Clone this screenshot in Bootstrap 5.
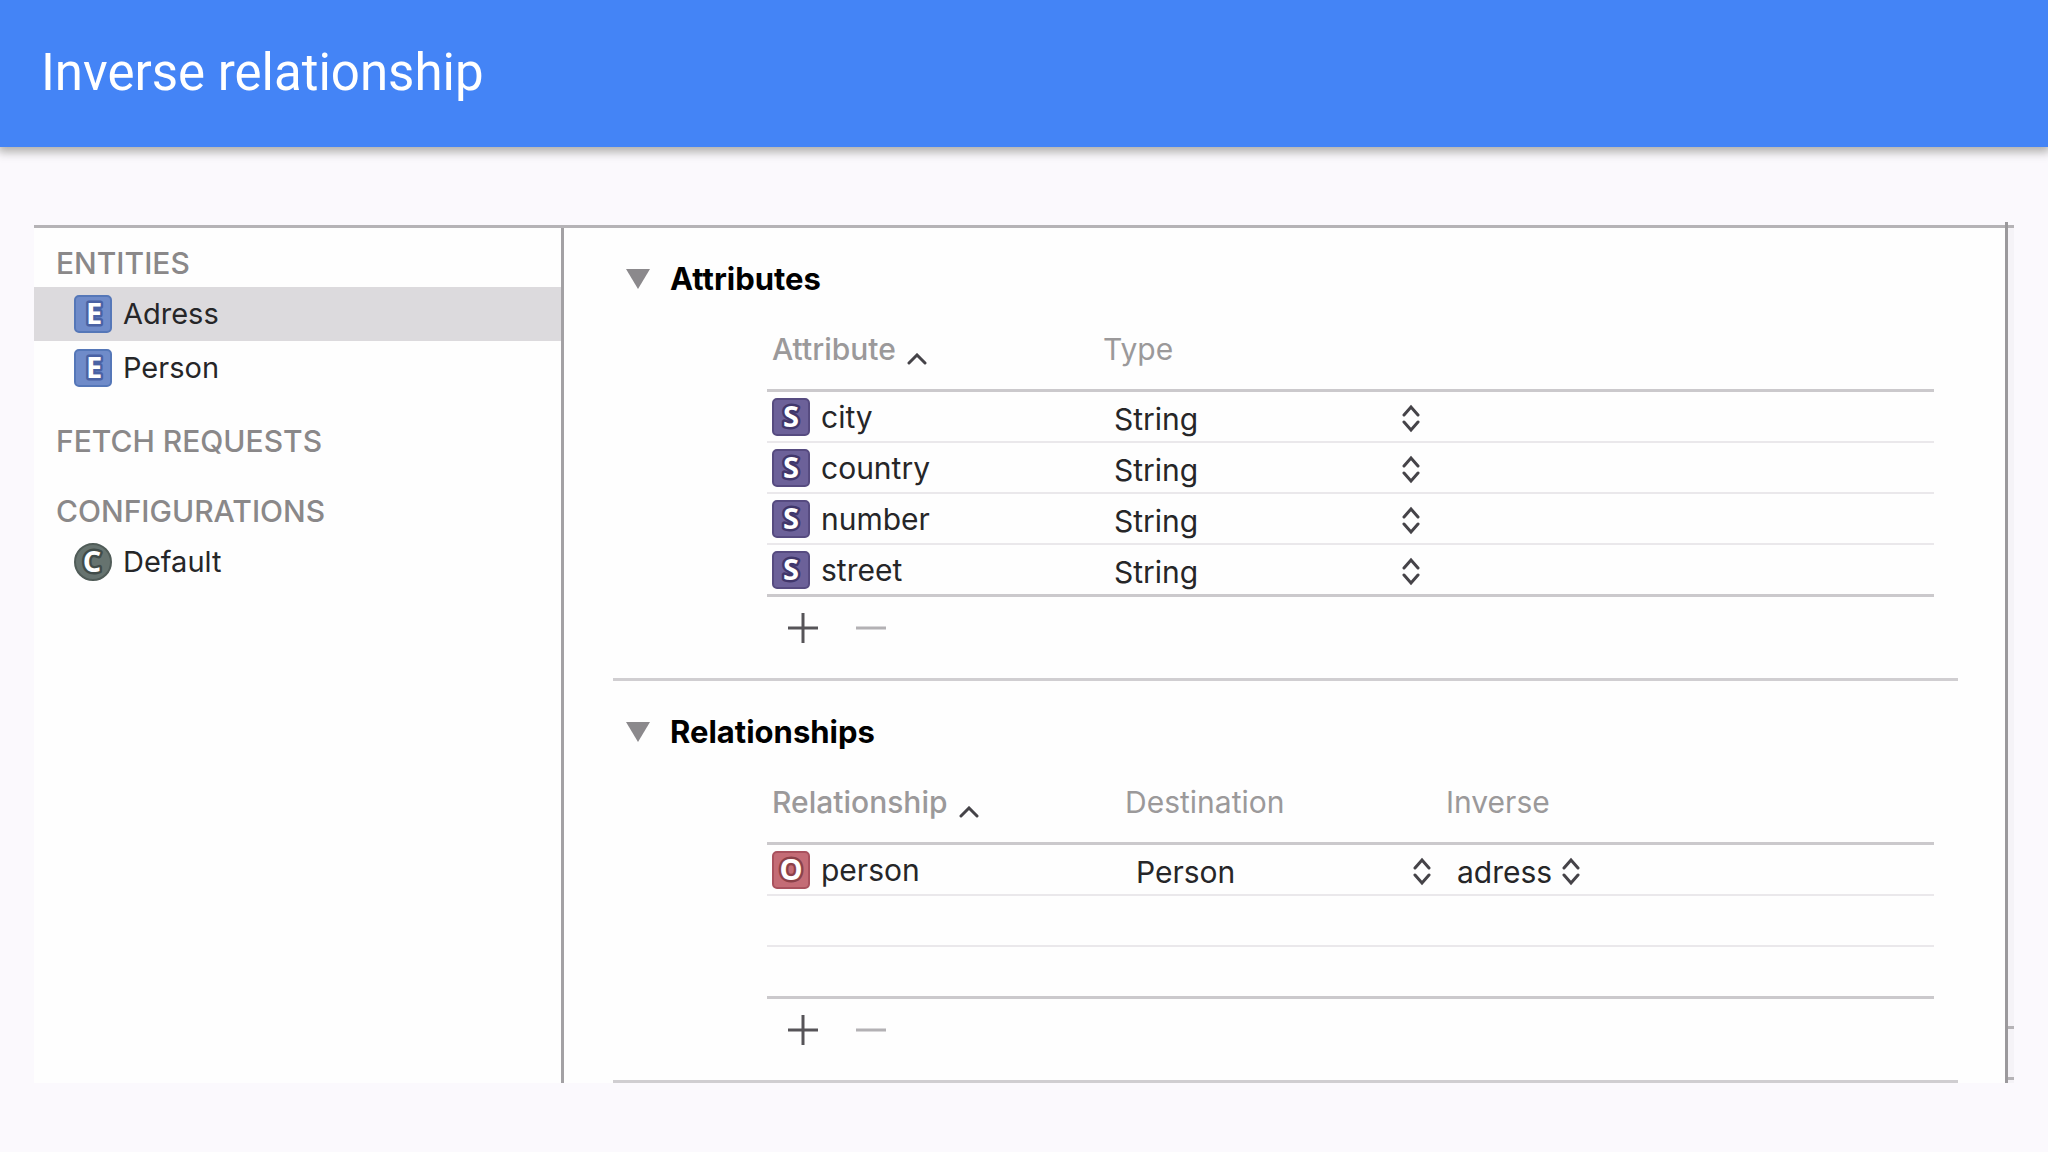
<!DOCTYPE html>
<html lang="en">
<head>
<meta charset="utf-8">
<meta name="viewport" content="width=device-width, initial-scale=1">
<title>Inverse relationship</title>
<link href="https://cdn.jsdelivr.net/npm/bootstrap@5.3.0/dist/css/bootstrap.min.css" rel="stylesheet">
<style>
  body { background: #fbf9fd; color: #262628; font-family: Inter, "Liberation Sans", sans-serif; font-size: 29px; line-height: 36px; }
  .slide-bar { background: #4484f6; height: 147px; padding: 0 41px 2px; box-shadow: 0 3px 9px 2px rgba(60, 60, 50, .4); }
  .slide-bar h1 { font-family: Roboto, sans-serif; font-size: 51px; font-weight: 400; line-height: 64px; color: #fff; }
  .slide-body { padding: 75px 34px; }
  .model-editor { margin-top: 3px; border-top: 3px solid #b5b3b6; background: #fefefe; min-width: 0; }
  .entity-nav { width: 530px; border-right: 3px solid #a3a1a4; }
  .nav-title { font-size: 30px; font-weight: 500; line-height: 36px; color: #8a8889; padding: 28px 22px 6px; }
  .nav-title.first-title { padding-top: 17px; }
  .entity-nav .list-group-item { height: 54px; padding: 0 0 0 40px; gap: 11px; background: transparent; color: #262628; }
  .entity-nav .list-group-item.active { background: #dcdadd; }
  .type-icon { width: 38px; height: 38px; flex: none; display: block; }
  symbol text { font-family: "Open Sans", sans-serif; font-weight: 700; font-size: 29px; text-anchor: middle; fill: #fff; paint-order: stroke; stroke-width: 5px; stroke-linejoin: round; }
  .details { padding: 0 47px 0 49px; min-width: 0; }
  .detail-section { padding: 33px 0 32px; border-bottom: 3px solid #d0ced1; }
  .section-toggle { padding: 0 0 0 13px; gap: 20px; font-size: 31px; font-weight: 700; line-height: 36px; color: #000; }
  .section-content { padding: 23px 24px 0 154px; }
  .prop-table { table-layout: fixed; border-collapse: separate; border-spacing: 0; font-size: 30px; line-height: 36px; }
  .prop-table th { padding: 11px 5px 22px; border-bottom: 3px solid #cbc9cc; color: #9b999a; font-weight: 400; }
  .prop-table td { height: 51px; padding: 0; border-bottom: 2px solid #eae8eb; vertical-align: middle; }
  .prop-table tr:last-child td { height: 52px; border-bottom: 3px solid #cbc9cc; }
  .col-attr { width: 331px; }
  .col-rel { width: 353px; }
  .col-dest { width: 321px; }
  .sort-btn { color: inherit; font-weight: 500; gap: 11px; line-height: 36px; }
  .sort-btn svg { margin-top: 19px; }
  .prop-name { padding-left: 5px; gap: 11px; }
  .prop-table .form-select { height: 45px; margin-top: 4px; padding: 0 24px 0 16px; border: 0; border-radius: 0; font-size: 30px; line-height: 36px; color: #262628; background-color: transparent; background-position: right center; background-size: 18px 29px;
    background-image: url("data:image/svg+xml,%3csvg xmlns='http://www.w3.org/2000/svg' viewBox='0 0 18 29'%3e%3cpath d='M2 11 9 3l7 8M2 18l7 8 7-8' fill='none' stroke='%23454348' stroke-width='3' stroke-linecap='round'/%3e%3c/svg%3e"); }
  .pick-type { width: 322px; }
  .pick-dest { width: 311px; }
  .pick-inverse { width: 139px; }
  .row-tools { padding: 13px 0 0 18px; gap: 32px; }
  .row-tools .btn { width: 36px; height: 36px; color: #565458; }
  .row-tools .btn:disabled { color: #b3b1b4; opacity: 1; }
  .pane-edge { width: 9px; border-left: 3px solid #9b999c; padding-top: 3px; }
  .edge-rows { background: #f5f3f7; border-top: 3px solid #b5b3b6; }
  .edge-cell { height: 54px; margin-bottom: 3px; border: solid #b5b3b6; border-width: 3px 0; }
</style>
<script src="https://cdn.jsdelivr.net/npm/bootstrap@5.3.0/dist/js/bootstrap.bundle.min.js"></script>
</head>
<body>
<svg class="d-none" aria-hidden="true">
  <symbol id="icon-entity" viewBox="0 0 38 38">
    <rect x="1" y="1" width="36" height="36" rx="4" fill="#6f8bc9" stroke="#5577b8" stroke-width="2"/>
    <text x="20" y="29" stroke="#4a62a4">E</text>
  </symbol>
  <symbol id="icon-config" viewBox="0 0 38 38">
    <circle cx="19" cy="19" r="18" fill="#66736f" stroke="#505c58" stroke-width="2"/>
    <text x="18" y="29" stroke="#414c49">C</text>
  </symbol>
  <symbol id="icon-string" viewBox="0 0 38 38">
    <rect x="1" y="1" width="36" height="36" rx="4" fill="#6c6199" stroke="#564b80" stroke-width="2"/>
    <text x="19" y="29" stroke="#41376b">S</text>
  </symbol>
  <symbol id="icon-object" viewBox="0 0 38 38">
    <rect x="1" y="1" width="36" height="36" rx="4" fill="#c46c76" stroke="#a9525e" stroke-width="2"/>
    <text x="19" y="29" stroke="#8c4149">O</text>
  </symbol>
  <symbol id="icon-disclosure" viewBox="0 0 24 20"><path d="M0 0h24L12 20z" fill="#8b898c"/></symbol>
  <symbol id="icon-sort" viewBox="0 0 20 12"><path d="M2 10l8-8 8 8" fill="none" stroke="#454348" stroke-width="3" stroke-linecap="round"/></symbol>
  <symbol id="icon-plus" viewBox="0 0 36 36"><path d="M3 18h30M18 3v30" stroke="currentColor" stroke-width="3"/></symbol>
  <symbol id="icon-minus" viewBox="0 0 36 36"><path d="M3 18h30" stroke="currentColor" stroke-width="3"/></symbol>
</svg>

<header class="slide-bar position-relative d-flex align-items-center">
  <h1 class="m-0">Inverse relationship</h1>
</header>

<main class="slide-body d-flex">
  <div class="model-editor d-flex flex-grow-1">
    <nav class="entity-nav flex-shrink-0" aria-label="Data model">
      <h2 class="nav-title first-title m-0">ENTITIES</h2>
      <div class="list-group list-group-flush">
        <a href="#" class="list-group-item border-0 d-flex align-items-center active" aria-current="true"><svg class="type-icon" aria-hidden="true"><use href="#icon-entity"/></svg>Adress</a>
        <a href="#" class="list-group-item border-0 d-flex align-items-center"><svg class="type-icon" aria-hidden="true"><use href="#icon-entity"/></svg>Person</a>
      </div>
      <h2 class="nav-title m-0">FETCH REQUESTS</h2>
      <h2 class="nav-title m-0">CONFIGURATIONS</h2>
      <div class="list-group list-group-flush">
        <a href="#" class="list-group-item border-0 d-flex align-items-center"><svg class="type-icon" aria-hidden="true"><use href="#icon-config"/></svg>Default</a>
      </div>
    </nav>

    <div class="details flex-grow-1">
      <section class="detail-section">
        <button type="button" class="section-toggle btn border-0 d-flex align-items-center" data-bs-toggle="collapse" data-bs-target="#attributes" aria-expanded="true" aria-controls="attributes">
          <svg width="24" height="20" aria-hidden="true"><use href="#icon-disclosure"/></svg>Attributes
        </button>
        <div id="attributes" class="collapse show">
          <div class="section-content">
            <table class="prop-table w-100">
              <colgroup><col class="col-attr"><col></colgroup>
              <thead>
                <tr>
                  <th scope="col" aria-sort="ascending"><button type="button" class="sort-btn bg-transparent border-0 p-0 d-flex align-items-center">Attribute<svg width="20" height="12" aria-hidden="true"><use href="#icon-sort"/></svg></button></th>
                  <th scope="col">Type</th>
                </tr>
              </thead>
              <tbody>
                <tr>
                  <td><div class="prop-name d-flex align-items-center"><svg class="type-icon" aria-hidden="true"><use href="#icon-string"/></svg>city</div></td>
                  <td><select class="form-select pick-type" aria-label="Type of city"><option>String</option></select></td>
                </tr>
                <tr>
                  <td><div class="prop-name d-flex align-items-center"><svg class="type-icon" aria-hidden="true"><use href="#icon-string"/></svg>country</div></td>
                  <td><select class="form-select pick-type" aria-label="Type of country"><option>String</option></select></td>
                </tr>
                <tr>
                  <td><div class="prop-name d-flex align-items-center"><svg class="type-icon" aria-hidden="true"><use href="#icon-string"/></svg>number</div></td>
                  <td><select class="form-select pick-type" aria-label="Type of number"><option>String</option></select></td>
                </tr>
                <tr>
                  <td><div class="prop-name d-flex align-items-center"><svg class="type-icon" aria-hidden="true"><use href="#icon-string"/></svg>street</div></td>
                  <td><select class="form-select pick-type" aria-label="Type of street"><option>String</option></select></td>
                </tr>
              </tbody>
            </table>
            <div class="row-tools d-flex">
              <button type="button" class="btn border-0 p-0 d-flex" aria-label="Add attribute"><svg width="36" height="36" aria-hidden="true"><use href="#icon-plus"/></svg></button>
              <button type="button" class="btn border-0 p-0 d-flex" aria-label="Remove attribute" disabled><svg width="36" height="36" aria-hidden="true"><use href="#icon-minus"/></svg></button>
            </div>
          </div>
        </div>
      </section>

      <section class="detail-section">
        <button type="button" class="section-toggle btn border-0 d-flex align-items-center" data-bs-toggle="collapse" data-bs-target="#relationships" aria-expanded="true" aria-controls="relationships">
          <svg width="24" height="20" aria-hidden="true"><use href="#icon-disclosure"/></svg>Relationships
        </button>
        <div id="relationships" class="collapse show">
          <div class="section-content">
            <table class="prop-table w-100">
              <colgroup><col class="col-rel"><col class="col-dest"><col></colgroup>
              <thead>
                <tr>
                  <th scope="col" aria-sort="ascending"><button type="button" class="sort-btn bg-transparent border-0 p-0 d-flex align-items-center">Relationship<svg width="20" height="12" aria-hidden="true"><use href="#icon-sort"/></svg></button></th>
                  <th scope="col">Destination</th>
                  <th scope="col">Inverse</th>
                </tr>
              </thead>
              <tbody>
                <tr>
                  <td><div class="prop-name d-flex align-items-center"><svg class="type-icon" aria-hidden="true"><use href="#icon-object"/></svg>person</div></td>
                  <td><select class="form-select pick-dest" aria-label="Destination of person"><option>Person</option></select></td>
                  <td><select class="form-select pick-inverse" aria-label="Inverse of person"><option>adress</option></select></td>
                </tr>
                <tr><td></td><td></td><td></td></tr>
                <tr><td></td><td></td><td></td></tr>
              </tbody>
            </table>
            <div class="row-tools d-flex">
              <button type="button" class="btn border-0 p-0 d-flex" aria-label="Add relationship"><svg width="36" height="36" aria-hidden="true"><use href="#icon-plus"/></svg></button>
              <button type="button" class="btn border-0 p-0 d-flex" aria-label="Remove relationship" disabled><svg width="36" height="36" aria-hidden="true"><use href="#icon-minus"/></svg></button>
            </div>
          </div>
        </div>
      </section>
    </div>
  </div>
  <div class="pane-edge d-flex flex-column flex-shrink-0">
    <div class="edge-rows flex-grow-1 d-flex flex-column justify-content-end">
      <div class="edge-cell"></div>
    </div>
  </div>
</main>
</body>
</html>
